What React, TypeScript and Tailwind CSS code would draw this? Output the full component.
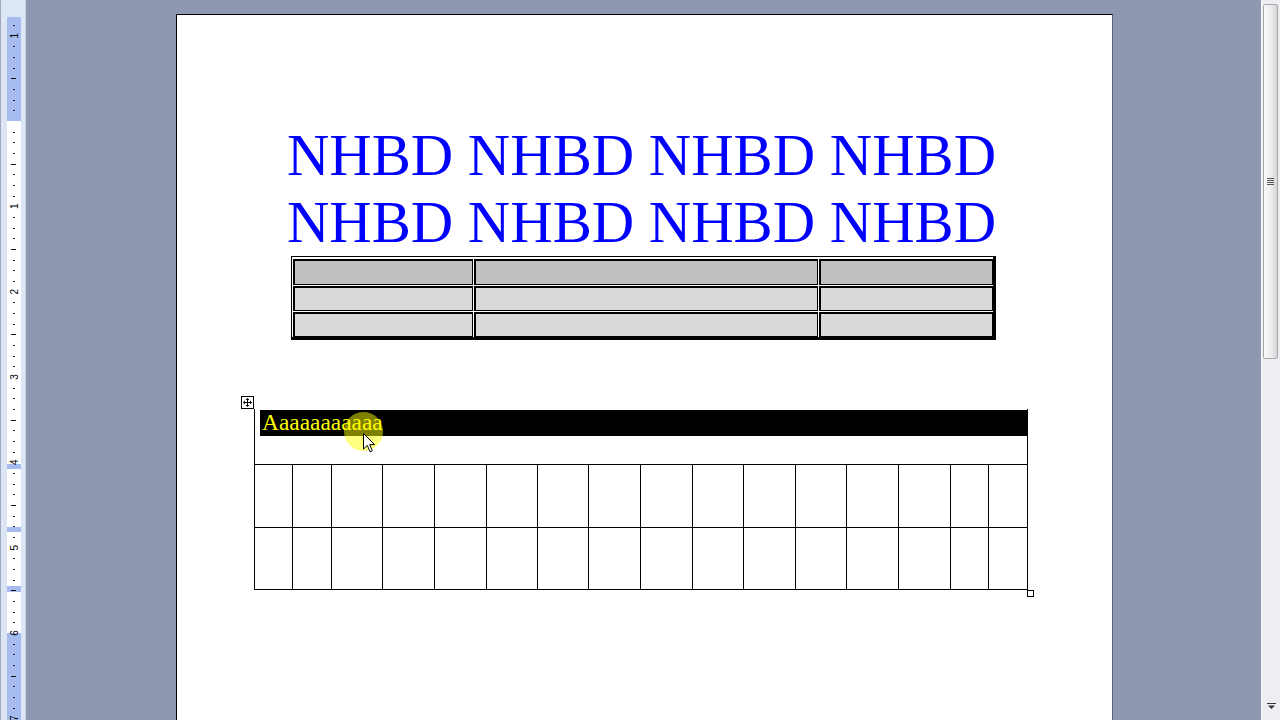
import React from "react";

const SERIF = "font-['Liberation_Serif','Times_New_Roman',serif]";

// vertical ruler: origin (top margin edge) at y=121, 1 inch = 85.33px, 8 ticks per inch
const ORIGIN = 121;
const STEP = 85.333 / 8;

function VerticalRuler() {
  const ticks: React.ReactNode[] = [];
  for (let k = -9; k <= 56; k++) {
    const y = ORIGIN + k * STEP;
    if (y < 20 || y > 720 || k === 0) continue;
    if (k % 8 === 0) {
      ticks.push(
        <text
          key={k}
          x={0}
          y={0}
          transform={`translate(14 ${y}) rotate(-90)`}
          textAnchor="middle"
          dominantBaseline="central"
          fontSize="10"
          fontFamily="Liberation Sans, Arial, sans-serif"
          fill="#000"
        >
          {Math.abs(k / 8)}
        </text>,
      );
    } else if (Math.abs(k % 8) === 4) {
      ticks.push(<rect key={k} x={11} y={Math.round(y)} width={5} height={1} fill="#111" />);
    } else {
      ticks.push(<rect key={k} x={13} y={Math.round(y)} width={2} height={1} fill="#222" />);
    }
  }

  return (
    <svg width="26" height="720" className="shrink-0 block">
      <rect x="0" y="0" width="26" height="720" fill="#dde6f4" />
      <rect x="0" y="0" width="1" height="720" fill="#9ea8bc" />
      <rect x="25" y="0" width="1" height="720" fill="#c9d3e4" />
      <rect x="7" y="17" width="14" height="703" fill="#ffffff" />
      <rect x="7" y="17" width="14" height="104" fill="#a6bcee" />
      <rect x="7" y="633" width="14" height="87" fill="#a6bcee" />
      <rect x="7" y="464" width="14" height="5" fill="#a6bcee" />
      <rect x="7" y="527" width="14" height="5" fill="#a6bcee" />
      <rect x="7" y="586" width="14" height="6" fill="#a6bcee" />
      {ticks}
    </svg>
  );
}

function Scrollbar() {
  return (
    <div className="relative w-[19px] shrink-0 h-[720px] bg-[#eceef2] border-l border-[#fafafa]">
      <div className="mt-[4px] ml-px w-[15px] h-[355px] rounded-[2px] border border-[#a9a9ad] bg-gradient-to-r from-[#fafafa] via-[#eeeeee] to-[#d6d6d8] flex items-center justify-center">
        <div className="flex flex-col gap-px">
          <div className="w-[7px] h-px bg-[#555]" />
          <div className="w-[7px] h-px bg-[#555]" />
          <div className="w-[7px] h-px bg-[#555]" />
          <div className="w-[7px] h-px bg-[#555]" />
        </div>
      </div>
      <svg width="9" height="7" className="absolute left-[5px] top-[703px]">
        <rect x="0" y="0" width="9" height="1" fill="#333" />
        <path d="M1 2.5 L8 2.5 L4.5 6 Z" fill="#333" />
      </svg>
    </div>
  );
}

function MoveHandle() {
  return (
    <svg width="13" height="13" className="absolute left-[-13px] top-[-13px]">
      <rect x="0.5" y="0.5" width="12" height="12" fill="#fff" stroke="#000" />
      <path d="M3 6.5 H10 M6.5 3 V10" stroke="#000" strokeWidth="1" />
      <path d="M6.5 2 L8.5 4 H4.5 Z M6.5 11 L4.5 9 H8.5 Z M2 6.5 L4 4.5 V8.5 Z M11 6.5 L9 8.5 V4.5 Z" fill="#000" />
    </svg>
  );
}

function Cursor() {
  return (
    <svg width="13" height="21" className="absolute left-[109px] top-[24px]">
      <path
        d="M0.5 0.5 L0.5 16 L4.3 12.4 L7 18.8 L9.3 17.8 L6.7 11.6 L11.6 11.6 Z"
        fill="#fff"
        stroke="#000"
        strokeWidth="1"
        strokeLinejoin="round"
      />
    </svg>
  );
}

const GRID_ROWS = [0, 1];
const GRID_COLS = Array.from({ length: 16 }, (_, i) => i);

function GridTable() {
  return (
    <div className="relative ml-[77px] mt-[69px] w-[774px]">
      <MoveHandle />
      <div className="h-[56px] border-l border-r border-b border-black pl-[5px] pt-px">
        <div className={`h-[26px] bg-black pl-[2px] text-[#ffff00] text-[23.4px] leading-[25px] ${SERIF}`}>
          Aaaaaaaaaaa
        </div>
      </div>
      <div className="grid grid-cols-[38px_39px_51px_52px_52px_51px_51px_52px_52px_51px_52px_51px_52px_52px_38px_39px] grid-rows-[63px_62px] border-l border-black">
        {GRID_ROWS.map((r) =>
          GRID_COLS.map((c) => <div key={`${r}-${c}`} className="border-r border-b border-black" />),
        )}
      </div>
      <div className="absolute left-[773px] top-[181px] w-[7px] h-[7px] border border-black bg-white" />
      <div className="absolute left-[90px] top-[3px] w-[39px] h-[39px] rounded-full bg-[#ffff00]/50" />
      <Cursor />
    </div>
  );
}

const SHADED_ROWS = ["bg-[#c0c0c0]", "bg-[#d9d9d9]", "bg-[#d9d9d9]"];

function ShadedTable() {
  return (
    <div className="ml-[114px] w-[705px] border-t border-l border-b-[3px] border-r-[3px] border-black pt-[2px] pl-px bg-white">
      <div className="grid grid-cols-[180px_344px_174px] grid-rows-[26px_25px_25px] gap-px">
        {SHADED_ROWS.map((bg, r) =>
          [0, 1, 2].map((c) => (
            <div
              key={`${r}-${c}`}
              className={`border-t-2 border-l-2 border-b border-r border-black ${bg}`}
            />
          )),
        )}
      </div>
    </div>
  );
}

export default function App() {
  return (
    <div className="flex w-[1280px] h-[720px] overflow-hidden bg-[#8e98b0]">
      <VerticalRuler />
      <div className="flex-1 h-[720px] overflow-hidden">
        <div className="ml-[150px] mt-[14px] w-[937px] h-[720px] bg-white border-l border-t border-black border-r border-r-[#5d6477]">
          <div className={`mt-[107px] pr-[6px] text-center text-[#0000ff] text-[58.7px] leading-[67px] ${SERIF}`}>
            <div>NHBD NHBD NHBD NHBD</div>
            <div>NHBD NHBD NHBD NHBD</div>
          </div>
          <ShadedTable />
          <GridTable />
        </div>
      </div>
      <Scrollbar />
    </div>
  );
}
